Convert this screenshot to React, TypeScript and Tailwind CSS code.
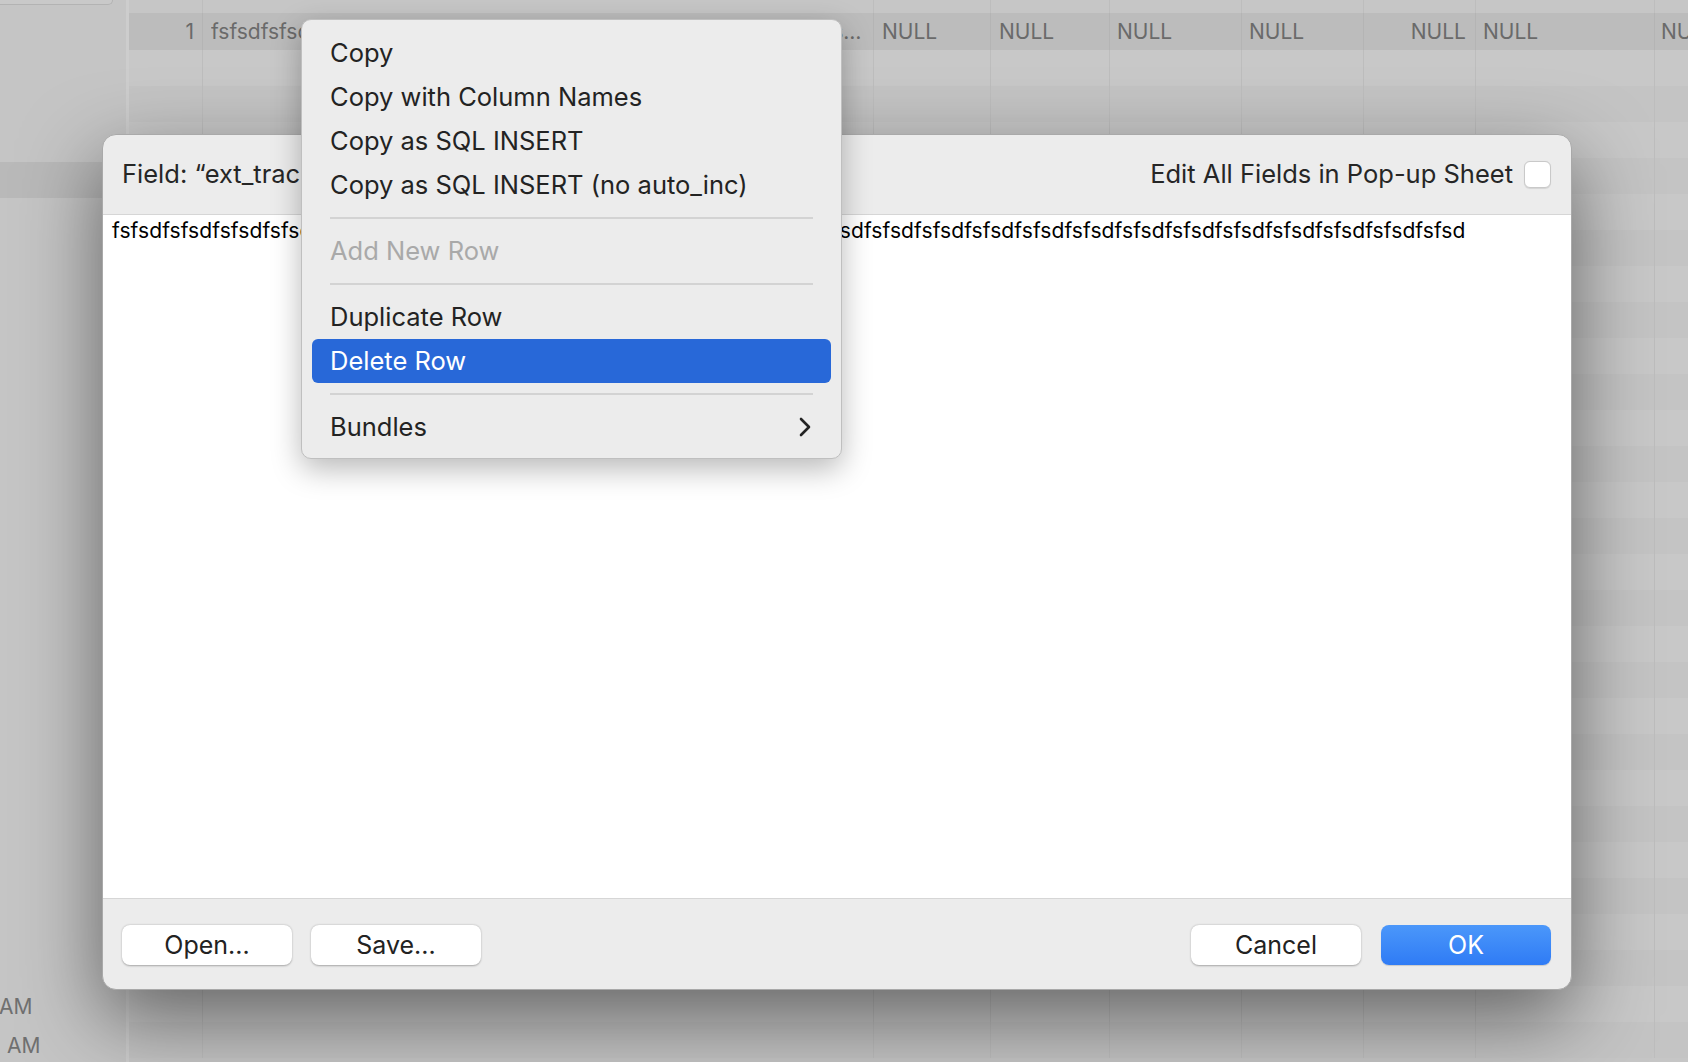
import React from 'react';

const cols = [74, 671, 117, 119, 132, 122, 112, 179, 40];

const menuItems: { label: string; kind?: 'sep' | 'disabled' | 'active' | 'sub' }[] = [
  { label: 'Copy' },
  { label: 'Copy with Column Names' },
  { label: 'Copy as SQL INSERT' },
  { label: 'Copy as SQL INSERT (no auto_inc)' },
  { label: '', kind: 'sep' },
  { label: 'Add New Row', kind: 'disabled' },
  { label: '', kind: 'sep' },
  { label: 'Duplicate Row' },
  { label: 'Delete Row', kind: 'active' },
  { label: '', kind: 'sep' },
  { label: 'Bundles', kind: 'sub' },
];

const Row = ({ idx }: { idx: number }) => (
  <div className={`flex h-[36px] shrink-0 ${idx % 2 === 0 ? 'bg-[#c8c8c8]' : 'bg-[#c4c4c4]'}`}>
    {cols.map((w, i) => (
      <div key={i} style={{ width: w }} className="shrink-0 border-r border-[#bdbdbd]" />
    ))}
  </div>
);

const Table = () => {
  const rows = Array.from({ length: 28 }, (_, i) => i);
  return (
    <div className="flex-1 flex flex-col overflow-hidden">
      <div className="flex h-[13px] shrink-0 bg-[#c6c6c6]">
        {cols.map((w, i) => (
          <div key={i} style={{ width: w }} className="shrink-0 border-r border-[#bdbdbd]" />
        ))}
      </div>
      <div className="flex h-[37px] shrink-0 bg-[#bcbcbc] text-[21px] text-[#6a6a6a] items-center">
        <div className="w-[74px] shrink-0 h-full border-r border-[#b4b4b4] flex items-center justify-end pr-[8px]">1</div>
        <div className="w-[671px] shrink-0 h-full border-r border-[#b4b4b4] flex items-center px-[8px] overflow-hidden">
          <span className="truncate">fsfsdfsfsdfsfsdfsfsdfsfsdfsfsdfsfsdfsfsdfsfsdfsfsdfsfsdfsfsdfsfsdfsfsdfsfsdfsfsd</span>
        </div>
        <div className="w-[117px] shrink-0 h-full border-r border-[#b4b4b4] flex items-center px-[8px]">NULL</div>
        <div className="w-[119px] shrink-0 h-full border-r border-[#b4b4b4] flex items-center px-[8px]">NULL</div>
        <div className="w-[132px] shrink-0 h-full border-r border-[#b4b4b4] flex items-center px-[7px]">NULL</div>
        <div className="w-[122px] shrink-0 h-full border-r border-[#b4b4b4] flex items-center px-[7px]">NULL</div>
        <div className="w-[112px] shrink-0 h-full border-r border-[#b4b4b4] flex items-center justify-end pr-[9px]">NULL</div>
        <div className="w-[179px] shrink-0 h-full border-r border-[#b4b4b4] flex items-center px-[7px]">NULL</div>
        <div className="w-[40px] shrink-0 h-full flex items-center px-[6px] overflow-hidden whitespace-nowrap">NU</div>
      </div>
      {rows.map((i) => (
        <Row key={i} idx={i} />
      ))}
    </div>
  );
};

const Sidebar = () => (
  <div className="w-[129px] shrink-0 flex flex-col bg-[#c5c5c5] border-r-[3px] border-[#cdcdcd] text-[21px] text-[#707070]">
    <div className="h-[5px] w-[113px] rounded-br-[8px] border-b border-r border-[#b3b3b3] bg-[#c9c9c9] shrink-0" />
    <div className="h-[157px] shrink-0" />
    <div className="h-[36px] bg-[#b9b9b9] shrink-0" />
    <div className="flex-1" />
    <div className="h-[39px] flex items-center pt-[6px] -ml-[1px] shrink-0">AM</div>
    <div className="h-[39px] flex items-center pt-[6px] pl-[7px] shrink-0">AM</div>
  </div>
);

const Button = ({ label, primary }: { label: string; primary?: boolean }) => (
  <button
    className={`w-[170px] h-[40px] rounded-[8px] text-[25px] leading-none flex items-center justify-center ${
      primary
        ? 'bg-gradient-to-b from-[#4b97fa] to-[#2f7bf5] text-white shadow-[0_1px_1px_rgba(0,0,0,0.15)]'
        : 'bg-white text-[#222] shadow-[0_0.5px_2px_rgba(0,0,0,0.3)]'
    }`}
  >
    {label}
  </button>
);

const Dialog = () => (
  <div className="absolute left-[102px] top-[134px] w-[1470px] h-[856px] rounded-[14px] bg-[#ececec] border border-[#a9a9a9] overflow-hidden flex flex-col shadow-[0_28px_80px_rgba(0,0,0,0.5)]">
    <div className="h-[79px] shrink-0 flex items-center justify-between pl-[19px] pr-[20px] text-[25.5px] text-[#262626]">
      <span>Field: “ext_tracking_data”</span>
      <div className="flex items-center gap-[11px]">
        <span>Edit All Fields in Pop-up Sheet</span>
        <div className="w-[27px] h-[27px] rounded-[6px] bg-white border border-[#c9c9c9] shadow-[0_0.5px_1px_rgba(0,0,0,0.1)]" />
      </div>
    </div>
    <div className="h-[1px] bg-[#d6d6d6] shrink-0" />
    <div className="flex-1 bg-white px-[9px] pt-[2px] text-[21px] leading-[28px] text-black tracking-[0.1px] whitespace-nowrap overflow-hidden">
      {'fsfsd'.repeat(27)}
    </div>
    <div className="h-[1px] bg-[#d6d6d6] shrink-0" />
    <div className="h-[90px] shrink-0 flex items-start justify-between pt-[26px] pl-[19px] pr-[20px]">
      <div className="flex gap-[19px]">
        <Button label="Open..." />
        <Button label="Save..." />
      </div>
      <div className="flex gap-[20px]">
        <Button label="Cancel" />
        <Button label="OK" primary />
      </div>
    </div>
  </div>
);

const ContextMenu = () => (
  <div className="absolute left-[301px] top-[19px] w-[541px] rounded-[10px] bg-[#ececec] border border-[#bfbfbf] shadow-[0_10px_30px_rgba(0,0,0,0.28)] pt-[11px] pb-[9px] text-[25.5px]">
    {menuItems.map((item, i) =>
      item.kind === 'sep' ? (
        <div key={i} className="h-[22px] flex items-center mx-[28px]">
          <div className="h-[2px] w-full bg-[#d3d3d3]" />
        </div>
      ) : (
        <div
          key={i}
          className={`h-[44px] mx-[10px] pl-[18px] pr-[20px] rounded-[6px] flex items-center justify-between ${
            item.kind === 'active'
              ? 'bg-[#2868d8] text-white'
              : item.kind === 'disabled'
              ? 'text-[#a9a9a9]'
              : 'text-[#232323]'
          }`}
        >
          <span>{item.label}</span>
          {item.kind === 'sub' && (
            <svg width="12" height="20" viewBox="0 0 12 20" fill="none">
              <polyline points="2,2 10,10 2,18" stroke="#232323" strokeWidth="2.6" strokeLinecap="round" strokeLinejoin="round" />
            </svg>
          )}
        </div>
      )
    )}
  </div>
);

export default function App() {
  return (
    <div
      className="relative w-[1688px] h-[1062px] overflow-hidden bg-[#c6c6c6] flex"
      style={{ fontFamily: 'Inter, "Noto Sans", sans-serif' }}
    >
      <Sidebar />
      <Table />
      <Dialog />
      <ContextMenu />
    </div>
  );
}
